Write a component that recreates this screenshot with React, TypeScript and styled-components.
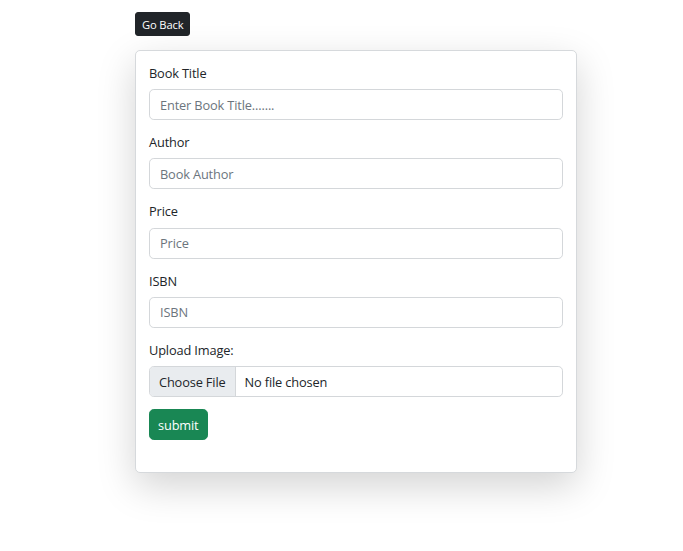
import React from "react";
import styled, { createGlobalStyle } from "styled-components";

const GlobalStyle = createGlobalStyle`
  * {
    box-sizing: border-box;
  }
  body {
    margin: 0;
    background: #fff;
    color: #212529;
    font-family: "Open Sans", "Noto Sans", sans-serif;
    font-size: 12.8px;
    line-height: 1.5;
    letter-spacing: -0.15px;
  }
`;

const Page = styled.div`
  padding: 12px 0 80px 135px;
`;

const BackBtn = styled.button`
  display: block;
  height: 24px;
  padding: 0 6px;
  border: 1px solid #212529;
  border-radius: 3px;
  background: #212529;
  color: #fff;
  font-family: inherit;
  font-size: 11.2px;
  letter-spacing: -0.15px;
  cursor: pointer;
`;

const Card = styled.div`
  width: 442px;
  margin-top: 14px;
  padding: 13px 13px 32px;
  border: 1px solid #d6d9dc;
  border-radius: 5px;
  background: #fff;
  box-shadow: 0 13px 38px rgba(0, 0, 0, 0.175);
`;

const Form = styled.form`
  display: flex;
  flex-direction: column;
`;

const Group = styled.div<{ $last?: boolean }>`
  display: flex;
  flex-direction: column;
  margin-bottom: ${(p) => (p.$last ? "12px" : "13px")};
`;

const Label = styled.label`
  margin-bottom: 6px;
  line-height: 19.2px;
`;

const Input = styled.input`
  height: 31px;
  padding: 0 10px;
  border: 1px solid #d4d7da;
  border-radius: 4.8px;
  font-family: inherit;
  font-size: 12.8px;
  letter-spacing: -0.15px;
  color: #212529;
  outline: none;

  &::placeholder {
    color: #6c757d;
  }

  &[type="file"] {
    padding: 0;
    line-height: 29px;
    overflow: hidden;
  }

  &::file-selector-button {
    height: 29px;
    margin: 0 9px 0 0;
    padding: 0 9px;
    border: 0;
    border-right: 1px solid #d4d7da;
    border-radius: 0;
    background: #e9ecef;
    color: #212529;
    font-family: inherit;
    font-size: 12.8px;
    letter-spacing: -0.15px;
  }
`;

const SubmitBtn = styled.button`
  align-self: flex-start;
  height: 31px;
  padding: 0 8px;
  border: 1px solid #198754;
  border-radius: 4.8px;
  background: #198754;
  color: #fff;
  font-family: inherit;
  font-size: 12.8px;
  letter-spacing: -0.15px;
  cursor: pointer;
`;

const fields = [
  { label: "Book Title", placeholder: "Enter Book Title......." },
  { label: "Author", placeholder: "Book Author" },
  { label: "Price", placeholder: "Price" },
  { label: "ISBN", placeholder: "ISBN" },
];

const App = () => {
  return (
    <Page>
      <GlobalStyle />
      <BackBtn>Go Back</BackBtn>
      <Card>
        <Form onSubmit={(e) => e.preventDefault()}>
          {fields.map((f) => (
            <Group key={f.label}>
              <Label>{f.label}</Label>
              <Input type="text" placeholder={f.placeholder} />
            </Group>
          ))}
          <Group $last>
            <Label>Upload Image:</Label>
            <Input type="file" />
          </Group>
          <SubmitBtn type="submit">submit</SubmitBtn>
        </Form>
      </Card>
    </Page>
  );
};

export default App;
